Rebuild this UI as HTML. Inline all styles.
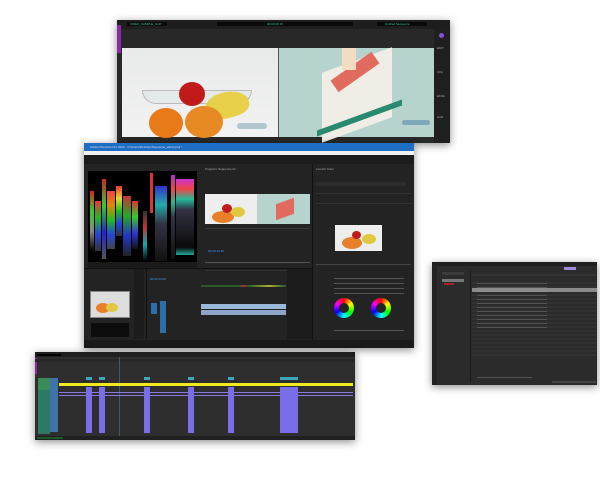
<!DOCTYPE html>
<html><head><meta charset="utf-8"><style>
*{margin:0;padding:0;box-sizing:border-box}
body{width:600px;height:491px;background:#fff;position:relative;overflow:hidden;font-family:"Liberation Sans",sans-serif}
.a{position:absolute}
.win{box-shadow:0 2px 8px rgba(0,0,0,.45)}
.t{font-size:3px;color:#aaa;white-space:nowrap}
</style></head><body>

<!-- top window -->
<div class="a win" style="left:117px;top:20px;width:333px;height:123px;background:#282828">
 <div class="a" style="left:0;top:0;width:333px;height:9px;background:#1e1e1e"></div>
 <div class="a" style="left:10px;top:2px;width:40px;height:4px;background:#0a0a0a"></div>
 <div class="a t" style="left:13px;top:2px;color:#3c9;font-size:3px">VIDEO_SAMPLE_CLIP</div>
 <div class="a" style="left:100px;top:2px;width:80px;height:4px;background:#0a0a0a"></div>
 <div class="a t" style="left:150px;top:2px;color:#3c9">00:00:26:15</div>
 <div class="a" style="left:176px;top:2px;width:60px;height:4px;background:#0a0a0a"></div>
 <div class="a" style="left:260px;top:2px;width:50px;height:4px;background:#0a0a0a"></div>
 <div class="a t" style="left:268px;top:2px;color:#3c9">Untitled Sequence</div>
 <div class="a" style="left:0;top:5px;width:4px;height:28px;background:#8a2aa8"></div>
 <div class="a" style="left:5px;top:28px;width:156px;height:89px;background:linear-gradient(#e9eaea,#f2f2f2)"></div>
 <div class="a" style="left:161px;top:28px;width:1px;height:89px;background:#555"></div>
 <div class="a" style="left:162px;top:28px;width:155px;height:89px;background:#b6d4cd"></div>
 <!-- fruit -->
 <div class="a" style="left:25px;top:70px;width:110px;height:14px;border:1px solid #bbb;border-radius:0 0 40px 40px;background:rgba(220,230,230,.5)"></div>
 <div class="a" style="left:88px;top:72px;width:44px;height:26px;background:#e8d04a;border-radius:50% 60% 40% 50%;transform:rotate(-15deg)"></div>
 <div class="a" style="left:62px;top:62px;width:26px;height:24px;background:#c01a1a;border-radius:50%"></div>
 <div class="a" style="left:32px;top:88px;width:34px;height:30px;background:#e87a1a;border-radius:50%"></div>
 <div class="a" style="left:68px;top:86px;width:38px;height:32px;background:#e88a24;border-radius:50%"></div>
 <div class="a" style="left:120px;top:103px;width:30px;height:6px;background:#8ab;border-radius:3px;opacity:.6"></div>
 <!-- house -->
 <div class="a" style="left:205px;top:40px;width:70px;height:70px;background:#f0ece6;transform:skewY(-20deg)"></div>
 <div class="a" style="left:200px;top:95px;width:85px;height:6px;background:#2a8a70;transform:skewY(-20deg)"></div>
 <div class="a" style="left:213px;top:45px;width:50px;height:14px;background:#e06b5e;transform:rotate(-35deg)"></div>
 <div class="a" style="left:225px;top:28px;width:14px;height:22px;background:#f2dcc2"></div>
 <div class="a" style="left:285px;top:100px;width:28px;height:5px;background:#5a8ab0;border-radius:3px;opacity:.6"></div>
 <div class="a" style="left:317px;top:9px;width:16px;height:114px;background:#1f1f1f"></div>
 <div class="a" style="left:322px;top:13px;width:5px;height:5px;background:#8050e0;border-radius:50%"></div>
 <div class="a t" style="left:320px;top:26px">EDIT</div>
 <div class="a t" style="left:320px;top:50px">COL</div>
 <div class="a t" style="left:320px;top:74px">EFFE</div>
 <div class="a t" style="left:320px;top:95px">AUD</div>
</div>

<!-- premiere window -->
<div class="a win" style="left:84px;top:143px;width:330px;height:205px;background:#232323">
 <div class="a" style="left:0;top:0;width:330px;height:8px;background:#1e6ec4"></div>
 <div class="a t" style="left:6px;top:2px;color:#dde">Adobe Premiere Pro 2024 - C:\Users\Desktop\Sequence_edit.prproj *</div>
 <div class="a" style="left:0;top:8px;width:330px;height:4px;background:#f2f2f2"></div>
 <div class="a" style="left:0;top:12px;width:330px;height:9px;background:#1c1c1c"></div>
 <!-- scope -->
 <div class="a" style="left:4px;top:28px;width:109px;height:91px;background:#000;overflow:hidden">
  <div class="a" style="left:2px;top:20px;width:4px;height:60px;background:linear-gradient(#d22,#3c3,#888,#000)"></div>
  <div class="a" style="left:7px;top:30px;width:6px;height:50px;background:linear-gradient(#e33,#2b2,#24d,#333)"></div>
  <div class="a" style="left:14px;top:8px;width:4px;height:80px;background:linear-gradient(#c22,#3c3,#22c,#555)"></div>
  <div class="a" style="left:19px;top:20px;width:8px;height:58px;background:linear-gradient(#e44,#d80,#2b2,#24d,#444)"></div>
  <div class="a" style="left:28px;top:15px;width:6px;height:50px;background:linear-gradient(#e33,#dd3,#2b2,#24d,#333)"></div>
  <div class="a" style="left:35px;top:25px;width:8px;height:60px;background:linear-gradient(#c33,#2a2,#23c,#222)"></div>
  <div class="a" style="left:44px;top:30px;width:6px;height:48px;background:linear-gradient(#d33,#3c3,#33c,#111)"></div>
  <div class="a" style="left:55px;top:40px;width:4px;height:50px;background:linear-gradient(#333,#b33,#1aa,#000)"></div>
  <div class="a" style="left:62px;top:2px;width:3px;height:40px;background:#d33"></div>
  <div class="a" style="left:67px;top:15px;width:12px;height:75px;background:linear-gradient(#33c,#2aa,#334 50%,#111)"></div>
  <div class="a" style="left:83px;top:4px;width:4px;height:84px;background:linear-gradient(#a3c,#e44,#2b9,#334 50%,#111)"></div>
  <div class="a" style="left:88px;top:8px;width:18px;height:76px;background:linear-gradient(#c3c,#e44,#2b9,#334 40%,#0a0a0a 90%,#2a9)"></div>
 </div>
 <div class="a" style="left:4px;top:119px;width:109px;height:6px;background:#1a1a1a"></div>
 <!-- program -->
 <div class="a t" style="left:121px;top:24px">Program: Sequence 01</div>
 <div class="a" style="left:121px;top:51px;width:52px;height:30px;background:#eee"></div>
 <div class="a" style="left:173px;top:51px;width:53px;height:30px;background:#b6d4cd"></div>
 <div class="a" style="left:128px;top:68px;width:22px;height:12px;background:#e8802a;border-radius:50%"></div>
 <div class="a" style="left:138px;top:61px;width:10px;height:9px;background:#c01a1a;border-radius:50%"></div>
 <div class="a" style="left:147px;top:64px;width:14px;height:10px;background:#e0c840;border-radius:50%"></div>
 <div class="a" style="left:192px;top:58px;width:18px;height:16px;background:#e06b5e;transform:skewY(-20deg)"></div>
 <div class="a" style="left:121px;top:85px;width:105px;height:1px;background:#3a3a3a"></div>
 <div class="a t" style="left:124px;top:106px;color:#39f">00:00:14:16</div>
 <div class="a" style="left:121px;top:119px;width:105px;height:1px;background:#555"></div>
 <div class="a" style="left:121px;top:127px;width:108px;height:1px;background:#333"></div>
 <!-- lumetri -->
 <div class="a" style="left:228px;top:21px;width:1px;height:184px;background:#111"></div>
 <div class="a t" style="left:232px;top:24px">Lumetri Color</div>
 <div class="a" style="left:232px;top:39px;width:90px;height:4px;background:#2c2c2c"></div>
 <div class="a" style="left:232px;top:50px;width:95px;height:1px;background:#333"></div>
 <div class="a" style="left:232px;top:60px;width:95px;height:1px;background:#333"></div>
 <div class="a" style="left:251px;top:82px;width:47px;height:26px;background:#eee"></div>
 <div class="a" style="left:258px;top:94px;width:20px;height:12px;background:#e8802a;border-radius:50%"></div>
 <div class="a" style="left:268px;top:88px;width:9px;height:8px;background:#c01a1a;border-radius:50%"></div>
 <div class="a" style="left:278px;top:91px;width:14px;height:10px;background:#e0c840;border-radius:50%"></div>
 <div class="a" style="left:232px;top:121px;width:95px;height:1px;background:#444"></div>
 <div class="a" style="left:250px;top:135px;width:70px;height:1px;background:#555"></div>
 <div class="a" style="left:250px;top:140px;width:70px;height:1px;background:#555"></div>
 <div class="a" style="left:250px;top:145px;width:70px;height:1px;background:#555"></div>
 <div class="a" style="left:250px;top:150px;width:70px;height:1px;background:#555"></div>
 <div class="a" style="left:250px;top:155px;width:20px;height:20px;border-radius:50%;background:conic-gradient(red,#ff0,lime,cyan,blue,#f0f,red)"></div>
 <div class="a" style="left:255px;top:160px;width:10px;height:10px;border-radius:50%;background:#232323"></div>
 <div class="a" style="left:287px;top:155px;width:20px;height:20px;border-radius:50%;background:conic-gradient(red,#ff0,lime,cyan,blue,#f0f,red)"></div>
 <div class="a" style="left:292px;top:160px;width:10px;height:10px;border-radius:50%;background:#232323"></div>
 <div class="a" style="left:250px;top:187px;width:70px;height:1px;background:#555"></div>
 <!-- bottom left -->
 <div class="a" style="left:0;top:125px;width:228px;height:1px;background:#111"></div>
 <div class="a" style="left:6px;top:148px;width:40px;height:27px;background:#ddd;border:1px solid #888"></div>
 <div class="a" style="left:12px;top:160px;width:14px;height:10px;background:#e8802a;border-radius:50%"></div>
 <div class="a" style="left:22px;top:160px;width:12px;height:9px;background:#e0c840;border-radius:50%"></div>
 <div class="a" style="left:7px;top:180px;width:38px;height:14px;background:#0c0c0c"></div>
 <div class="a" style="left:50px;top:126px;width:10px;height:70px;background:#1c1c1c"></div>
 <!-- timeline -->
 <div class="a" style="left:62px;top:126px;width:1px;height:70px;background:#111"></div>
 <div class="a t" style="left:66px;top:134px;color:#39f">00:00:24:08</div>
 <div class="a" style="left:117px;top:142px;width:85px;height:2px;background:linear-gradient(90deg,#2a5a2a 45%,#a33 50%,#2a5a2a 55%,#aa3 80%,#2a5a2a)"></div>
 <div class="a" style="left:117px;top:161px;width:85px;height:5px;background:#9ab8d8"></div>
 <div class="a" style="left:117px;top:167px;width:85px;height:5px;background:#8ea4c8"></div>
 <div class="a" style="left:67px;top:160px;width:6px;height:11px;background:#2b6ea8"></div>
 <div class="a" style="left:76px;top:158px;width:6px;height:32px;background:#2b6ea8"></div>
 <div class="a" style="left:203px;top:126px;width:25px;height:70px;background:#1b1b1b"></div>
 <div class="a" style="left:0;top:197px;width:330px;height:8px;background:#1a1a1a"></div>
</div>

<!-- bottom timeline -->
<div class="a win" style="left:35px;top:352px;width:320px;height:88px;background:#2e2e2e">
 <div class="a" style="left:0;top:0;width:320px;height:5px;background:#1e1e1e"></div>
 <div class="a" style="left:2px;top:2px;width:24px;height:2px;background:#000"></div>
 <div class="a" style="left:0;top:6px;width:2px;height:16px;background:#8a2aa8"></div>
 <div class="a" style="left:0;top:7px;width:320px;height:3px;background:#262626"></div>
 <div class="a" style="left:84px;top:5px;width:1px;height:80px;background:#3b5a6b"></div>
 <div class="a" style="left:3px;top:26px;width:12px;height:12px;background:#3a8a5a"></div>
 <div class="a" style="left:3px;top:38px;width:12px;height:44px;background:#2e7a64"></div>
 <div class="a" style="left:15px;top:26px;width:8px;height:54px;background:#3e74a8"></div>
 <div class="a" style="left:24px;top:31px;width:294px;height:3px;background:#f2ea20"></div>
 <div class="a" style="left:24px;top:40px;width:294px;height:1px;background:#8a7ae0"></div>
 <div class="a" style="left:24px;top:43px;width:294px;height:1px;background:#8a7ae0"></div>
 <div class="a" style="left:51px;top:35px;width:6px;height:46px;background:#7a6de8"></div>
 <div class="a" style="left:64px;top:35px;width:6px;height:46px;background:#7a6de8"></div>
 <div class="a" style="left:109px;top:35px;width:6px;height:46px;background:#7a6de8"></div>
 <div class="a" style="left:153px;top:35px;width:6px;height:46px;background:#7a6de8"></div>
 <div class="a" style="left:193px;top:35px;width:6px;height:46px;background:#7a6de8"></div>
 <div class="a" style="left:245px;top:35px;width:18px;height:46px;background:#7a6de8"></div>
 <div class="a" style="left:51px;top:25px;width:6px;height:3px;background:#3aa8b8"></div>
 <div class="a" style="left:64px;top:25px;width:6px;height:3px;background:#3aa8b8"></div>
 <div class="a" style="left:109px;top:25px;width:6px;height:3px;background:#3aa8b8"></div>
 <div class="a" style="left:153px;top:25px;width:6px;height:3px;background:#3aa8b8"></div>
 <div class="a" style="left:193px;top:25px;width:6px;height:3px;background:#3aa8b8"></div>
 <div class="a" style="left:245px;top:25px;width:18px;height:3px;background:#3aa8b8"></div>
 <div class="a" style="left:0;top:84px;width:320px;height:4px;background:#202020"></div>
 <div class="a" style="left:2px;top:85px;width:26px;height:2px;background:#1a5a2a"></div>
</div>

<!-- right window -->
<div class="a win" style="left:432px;top:262px;width:165px;height:123px;background:#2b2b2b">
 <div class="a" style="left:0;top:0;width:165px;height:4px;background:#1f1f1f"></div>
 <div class="a" style="left:0;top:4px;width:5px;height:119px;background:#222"></div>
 <div class="a" style="left:10px;top:10px;width:22px;height:3px;background:#3a3a3a"></div>
 <div class="a" style="left:10px;top:17px;width:22px;height:3px;background:#777"></div>
 <div class="a" style="left:12px;top:21px;width:10px;height:2px;background:#a22"></div>
 <div class="a" style="left:38px;top:8px;width:1px;height:112px;background:#1b1b1b"></div>
 <div class="a" style="left:39px;top:12px;width:126px;height:2px;background:#333"></div>
 <div class="a" style="left:132px;top:5px;width:12px;height:3px;background:#a08adf"></div>
 <div class="a" style="left:40px;top:18px;width:125px;height:76px;background:repeating-linear-gradient(#2b2b2b 0 2px,#313131 2px 4px)"></div>
 <div class="a" style="left:40px;top:26px;width:125px;height:4px;background:#8a8a8a"></div>
 <div class="a" style="left:45px;top:18px;width:70px;height:50px;background:repeating-linear-gradient(transparent 0 3px,rgba(180,180,180,.25) 3px 4px)"></div>
 <div class="a" style="left:45px;top:115px;width:55px;height:1px;background:#555"></div>
 <div class="a" style="left:120px;top:119px;width:44px;height:2px;background:#444"></div>
</div>
</body></html>
